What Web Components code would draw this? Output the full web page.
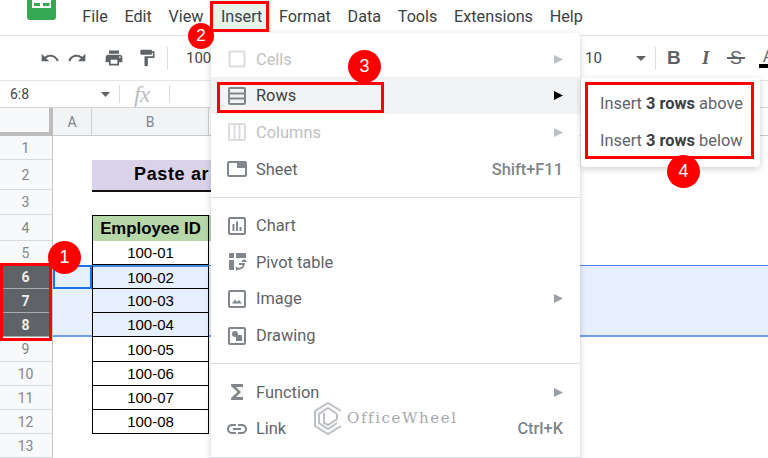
<!DOCTYPE html>
<html><head><meta charset="utf-8"><style>
html,body{margin:0;padding:0;background:#fff}
body{font-family:Roboto,"Liberation Sans",sans-serif;width:768px;height:458px;overflow:hidden}
</style></head><body>
<x-app>
  <x-menubar></x-menubar>
  <x-toolbar></x-toolbar>
  <x-formulabar></x-formulabar>
  <x-sheet></x-sheet>
  <x-menu></x-menu>
  <x-submenu></x-submenu>
  <x-watermark></x-watermark>
  <x-callout style="left:0;top:263px;width:52px;height:78px"></x-callout>
  <x-callout style="left:210px;top:1px;width:59px;height:31px"></x-callout>
  <x-callout style="left:217px;top:82px;width:167px;height:31px"></x-callout>
  <x-callout style="left:585px;top:82px;width:169px;height:77px"></x-callout>
  <x-badge style="left:48px;top:241px">1</x-badge>
  <x-badge small style="left:188px;top:23px">2</x-badge>
  <x-badge style="left:348px;top:50px">3</x-badge>
  <x-badge style="left:667px;top:155px">4</x-badge>
</x-app>
<script>
const def=(n,html)=>customElements.define(n,class extends HTMLElement{constructor(){super();this.attachShadow({mode:'open'}).innerHTML=typeof html==='function'?html():html;}});
const I=(d,extra='',s=20,vb=24)=>`<svg width="${s}" height="${s}" viewBox="0 0 ${vb} ${vb}" ${extra}>${d}</svg>`;

def('x-app',`<style>:host{display:flex;flex-direction:column;position:relative;width:768px;height:458px;overflow:hidden;background:#fff}</style><slot></slot>`);

def('x-menubar',()=>`<style>
:host{display:flex;height:35px;flex:none;align-items:flex-start;font:16.2px Roboto,sans-serif;color:#3c4043;border-bottom:1px solid #e3e4e7}
.logo{margin-left:26px;margin-right:0;flex:none}
span{padding:8px 8.35px 0;height:32px;box-sizing:border-box;line-height:18px;white-space:nowrap}
span.on{background:#e6f2ea}
nav{display:flex;margin-left:17px}
</style>
<svg class="logo" width="31" height="20" viewBox="0 0 31 20"><rect x="1" y="-10" width="29" height="30" rx="3" fill="#34a853"/><rect x="6" y="-2" width="19" height="10" fill="#fff"/><rect x="8" y="3" width="6" height="3" fill="#34a853"/><rect x="17" y="3" width="6.500" height="3" fill="#34a853"/></svg>
<nav><span>File</span><span>Edit</span><span style="padding-right:9px">View</span><span class="on">Insert</span><span>Format</span><span>Data</span><span>Tools</span><span>Extensions</span><span>Help</span></nav>`);

def('x-toolbar',()=>{
const c='#5f6368';
return `<style>
:host{display:flex;height:45px;flex:none;align-items:center;font:15px Roboto,sans-serif;color:#444;border-bottom:1px solid #e3e4e7;box-sizing:border-box;padding-left:40px;white-space:nowrap;overflow:hidden}
svg{flex:none}
span{flex:none}
.sep{width:1px;height:23px;background:#dadce0;flex:none}
</style>
${I(`<path fill="${c}" d="M12.500 8c-2.650 0-5.050 1-6.900 2.600L2 7v9h9l-3.620-3.620c1.390-1.160 3.160-1.880 5.120-1.880 3.540 0 6.550 2.310 7.600 5.500l2.370-.780C20.900 11.520 17.050 8 12.500 8z"/>`)}
<span style="width:7px"></span>
${I(`<path fill="${c}" d="M18.400 10.600C16.550 9 14.150 8 11.500 8c-4.650 0-8.580 3.030-9.960 7.220L3.900 16c1.050-3.190 4.050-5.500 7.600-5.500 1.950 0 3.730.720 5.120 1.880L13 16h9V7l-3.600 3.600z"/>`)}
<span style="width:17px"></span>
${I(`<path fill="${c}" d="M19 8H5c-1.660 0-3 1.340-3 3v6h4v4h12v-4h4v-6c0-1.660-1.340-3-3-3zm-3 11H8v-5h8v5zm3-7c-.550 0-1-.450-1-1s.450-1 1-1 1 .450 1 1-.450 1-1 1zm-1-9H6v4h12V3z"/>`)}
<span style="width:13px"></span>
${I(`<path fill="${c}" d="M18 4V3c0-.550-.450-1-1-1H5c-.550 0-1 .450-1 1v4c0 .550.450 1 1 1h12c.550 0 1-.450 1-1V6h1v4H9v11c0 .550.450 1 1 1h2c.550 0 1-.450 1-1v-9h8V4h-3z"/>`)}
<span style="width:10px"></span><i class="sep"></i>
<span style="margin-left:18px;width:399px">100%</span>
<span style="width:51px">10</span>
<svg width="10" height="5" viewBox="0 0 10 5"><path fill="${c}" d="M0 0h10L5 5z"/></svg>
<i class="sep" style="margin-left:9px"></i>
<span style="margin-left:11px;width:14px;font:bold 19px 'Liberation Sans',sans-serif;color:${c}">B</span>
<span style="margin-left:21px;width:8px;font:italic bold 19px 'Liberation Serif',serif;color:${c}">I</span>
<span style="margin-left:17px;padding:0 3px;font:18px 'Liberation Sans',sans-serif;color:${c};background:linear-gradient(${c},${c}) center/100% 2px no-repeat">S</span>
<span style="margin-left:14px;padding-left:4px;width:24px;box-sizing:border-box;font:16px 'Liberation Sans',sans-serif;color:${c};border-bottom:4px solid #000;line-height:15px">A</span>`});

def('x-formulabar',`<style>
:host{display:flex;height:27px;flex:none;align-items:center;font:14px Roboto,sans-serif;color:#444;padding-left:10px;box-sizing:border-box;border-bottom:1px solid #d5d6d8}
.sep{width:1px;height:18px;background:#dadce0;flex:none}
b{font:italic 24px "Liberation Serif",serif;color:#bdbdbd;letter-spacing:-1px}
</style><span style="width:91px">6:8</span>
<svg width="9" height="5" viewBox="0 0 9 5"><path fill="#5f6368" d="M0 0h9L4.500 5z"/></svg>
<i class="sep" style="margin-left:9px"></i><b style="margin-left:14px;width:35px">fx</b><i class="sep"></i>`);

def('x-sheet',()=>{
const rows=[24,30,25,26,24,24,24,24,25,24,24,24,24];
const rowH=rows.map(h=>h+'px').join(' ');
let h='';
const vals={5:'100-01',6:'100-02',7:'100-03',8:'100-04',9:'100-05',10:'100-06',11:'100-07',12:'100-08'};
h+=`<div class="corner"></div><div class="ch">A</div><div class="ch">B</div><div class="ch rest"></div>`;
rows.forEach((_,i)=>{const r=i+1,sel=r>=6&&r<=8;
 const tb=(r==6?' st':'')+(r==8?' sb':'');
 const blank=`<div class="c${sel?' band':''}${tb}"></div>`;
 h+=`<div class="rh${sel?' s':''}">${r}</div>`;
 h+=`<div class="c${sel?' band':''}${tb}${r==6?' act':''}"></div>`;
 if(r==2){h+=`<div class="title"><span>Paste ar</span></div><div class="c"></div>`;return;}
 if(r==4){h+=`<div class="c hd">Employee ID</div><div class="c hd2"></div><div class="c"></div>`;return;}
 if(vals[r]){h+=`<div class="c v${sel?' band':''}${tb}">${vals[r]}</div>${blank}${blank}`;return;}
 h+=`${blank}${blank}${blank}`;
});
return `<style>
:host{display:grid;flex:none;grid-template-columns:53px 39px 117px 300px 259px;grid-template-rows:28px ${rowH};font:15px "Liberation Sans",Arial,sans-serif;color:#000}
div{box-sizing:border-box}
.corner{background:#f8f9fa;border-right:4px solid #bdbdbd;border-bottom:4px solid #bdbdbd}
.ch{background:#f1f3f4;border-right:1px solid #d0d1d3;border-bottom:1px solid #c8c9cb;color:#80868b;font:14px Roboto,sans-serif;display:flex;align-items:center;justify-content:center}
.ch.rest{grid-column:4/6;background:#fff;border:0;border-bottom:1px solid #c8c9cb}
.rh{background:#f8f9fa;color:#80868b;font:14px Roboto,sans-serif;display:flex;align-items:center;justify-content:center;padding-right:1px;border-right:1px solid #c4c5c7;border-bottom:1px solid #d8d9db}
.rh.s{background:#5f6368;color:#eee;font-weight:700;border-bottom:1px solid #a9aaac}
.c{background:#fff}
.band{background:#e6effc}
.st{border-top:1px solid #4a86e8}
.sb{border-bottom:2px solid #6d9eeb}
.act{border:2px solid #1a73e8}
.title{grid-column:3/5;background:#d9d2e9;border-bottom:2px solid #111;margin-bottom:-2px;position:relative;font:bold 18px "Liberation Sans",sans-serif;padding:4px 0 0 42px;letter-spacing:.65px;white-space:nowrap}
.hd{background:#b6d7a8;border:1px solid #000;font-weight:700;font-size:16.800px;display:flex;align-items:center;justify-content:center;height:27px;white-space:nowrap}
.hd2{background:#b6d7a8}
.v{border-left:1px solid #000;border-right:1px solid #000;border-bottom:1px solid #000;display:flex;align-items:center;justify-content:center}
.v.st{border-top:2px solid #4a86e8}
</style>${h}`});

const ic={
cells:`<rect x="4.500" y="4.500" width="15" height="15" rx="1" fill="none" stroke="currentColor" stroke-width="2"/>`,
rows:`<path fill="none" stroke="currentColor" stroke-width="2" d="M5 4h14a1 1 0 0 1 1 1v14a1 1 0 0 1-1 1H5a1 1 0 0 1-1-1V5a1 1 0 0 1 1-1zM4 9.500h16M4 14.500h16"/>`,
cols:`<path fill="none" stroke="currentColor" stroke-width="2" d="M5 4h14a1 1 0 0 1 1 1v14a1 1 0 0 1-1 1H5a1 1 0 0 1-1-1V5a1 1 0 0 1 1-1zM9.500 4v16M14.500 4v16"/>`,
sheet:`<path fill="none" stroke="currentColor" stroke-width="2" d="M4 5h16a1 1 0 0 1 1 1v12a1 1 0 0 1-1 1H4a1 1 0 0 1-1-1V6a1 1 0 0 1 1-1z"/><rect x="12" y="5" width="9" height="6" fill="currentColor"/>`,
chart:`<path fill="none" stroke="currentColor" stroke-width="2" d="M5 4h14a1 1 0 0 1 1 1v14a1 1 0 0 1-1 1H5a1 1 0 0 1-1-1V5a1 1 0 0 1 1-1z"/><path fill="currentColor" d="M7.500 10h2v7h-2zM11 7.500h2V17h-2zM14.500 13h2v4h-2z"/>`,
pivot:`<path fill="currentColor" d="M4 4a1 1 0 0 1 1-1h4v5H4zM11 3h9a1 1 0 0 1 1 1v4H11zM4 10h5v10H5a1 1 0 0 1-1-1z"/><path fill="none" stroke="currentColor" stroke-width="1.800" d="M12 18.500c4 1 7-1 7-5.500M14 14h5"/><path fill="currentColor" d="M16.500 11l3-2 2.500 3h-5zM11 16.500l3 2-3 2.500z"/>`,
image:`<path fill="none" stroke="currentColor" stroke-width="2" d="M5 4h14a1 1 0 0 1 1 1v14a1 1 0 0 1-1 1H5a1 1 0 0 1-1-1V5a1 1 0 0 1 1-1z"/><path fill="currentColor" d="M7 16.500l3-4 2 2.500 2-2 3 3.500z"/>`,
drawing:`<path fill="none" stroke="currentColor" stroke-width="2" d="M5 4h14a1 1 0 0 1 1 1v14a1 1 0 0 1-1 1H5a1 1 0 0 1-1-1V5a1 1 0 0 1 1-1z"/><circle cx="10" cy="10" r="3" fill="currentColor"/><rect x="11" y="11" width="6" height="6" fill="currentColor"/>`,
sigma:`<path fill="currentColor" d="M18 4H6v2l6.500 6L6 18v2h12v-3h-7l5-5-5-5h7z"/>`,
link:`<path fill="currentColor" d="M3.900 12c0-1.710 1.390-3.100 3.100-3.100h4V7H7c-2.760 0-5 2.240-5 5s2.240 5 5 5h4v-1.900H7c-1.710 0-3.100-1.390-3.100-3.100zM8 13h8v-2H8v2zm9-6h-4v1.900h4c1.710 0 3.100 1.390 3.100 3.100s-1.390 3.100-3.100 3.100h-4V17h4c2.760 0 5-2.240 5-5s-2.240-5-5-5z"/>`
};
def('x-menu',()=>{
const item=(k,t,o={})=>`<div class="it${o.dis?' dis':''}${o.on?' on':''}">${I(ic[k],'class="ico"',24)}<span class="t">${t}</span>${o.key?`<span class="k">${o.key}</span>`:''}${o.arr?`<svg class="arr" width="9" height="9" viewBox="0 0 10 10"><path fill="currentColor" d="M0 0l10 5-10 5z"/></svg>`:''}</div>`;
return `<style>
:host{position:absolute;left:211px;top:33px;width:369px;height:440px;background:#fff;box-shadow:0 2px 6px rgba(60,64,67,.25);box-sizing:border-box;padding-top:7.700px;font:16.400px Roboto,sans-serif;color:#5f6368;border-radius:4px 4px 0 0}
.it{display:flex;align-items:center;height:36.700px;padding:0 17px 0 14px}
.ico{flex:none;color:#80868b}
.t{margin-left:7px;flex:1}
.k{color:#80868b;font-weight:500}
.arr{color:#9aa0a6;margin-left:auto}
.on{background:#f1f3f4}.on .t{color:#3c4043}.on .arr{color:#000}
.dis .t{color:#bdc1c6}.dis .ico{color:#dadce0}.dis .arr{color:#bdc1c6}
hr{border:0;height:1px;background:#dadce0;margin:9.400px 0}
</style>
${item('cells','Cells',{dis:1,arr:1})}${item('rows','Rows',{on:1,arr:1})}${item('cols','Columns',{dis:1,arr:1})}${item('sheet','Sheet',{key:'Shift+F11'})}
<hr>
${item('chart','Chart')}${item('pivot','Pivot table')}${item('image','Image',{arr:1})}${item('drawing','Drawing')}
<hr>
${item('sigma','Function',{arr:1})}${item('link','Link',{key:'Ctrl+K'})}
<hr>`});

def('x-submenu',`<style>
:host{position:absolute;left:581px;top:78px;width:179px;height:89px;background:#fff;box-shadow:0 2px 6px rgba(60,64,67,.25);border-radius:0 0 4px 4px;box-sizing:border-box;padding-top:7px;font:16.400px Roboto,sans-serif;color:#5f6368}
div{height:37px;padding-left:19px;display:flex;align-items:center;white-space:pre}
b{font-weight:700;color:#3c4043}
</style><div>Insert <b>3 rows</b> above</div><div>Insert <b>3 rows</b> below</div>`);

def('x-watermark',`<style>
:host{position:absolute;left:310px;top:400px;width:150px;height:36px;display:flex;align-items:center;background:rgba(255,255,255,.85);color:#a5a9ae}
span{font:15px "DejaVu Serif","Liberation Serif",serif;letter-spacing:1.600px;margin-left:3px;white-space:nowrap}
</style><svg width="34" height="36" viewBox="0 0 34 36" fill="none" stroke="#bcc0c5" stroke-width="2"><path d="M31 11L18 3 5 11v15l13 8 13-8"/><path d="M27 14l-9-6-9 6v9l9 6 9-6"/><path d="M14 13v10l4 2 9-6v-5"/></svg><span>OfficeWheel</span>`);

def('x-callout',`<style>:host{position:absolute;box-sizing:border-box;border:3px solid #f00;display:block}</style>`);
customElements.define('x-badge',class extends HTMLElement{constructor(){super();const s=this.hasAttribute('small')?26:33;this.attachShadow({mode:'open'}).innerHTML=`<style>:host{position:absolute;width:${s}px;height:${s}px;border-radius:50%;background:#f00;color:#fff;display:flex;align-items:center;justify-content:center;font:${s>30?18:17}px "Liberation Sans",sans-serif}</style><slot></slot>`;}});
</script>
</body></html>
